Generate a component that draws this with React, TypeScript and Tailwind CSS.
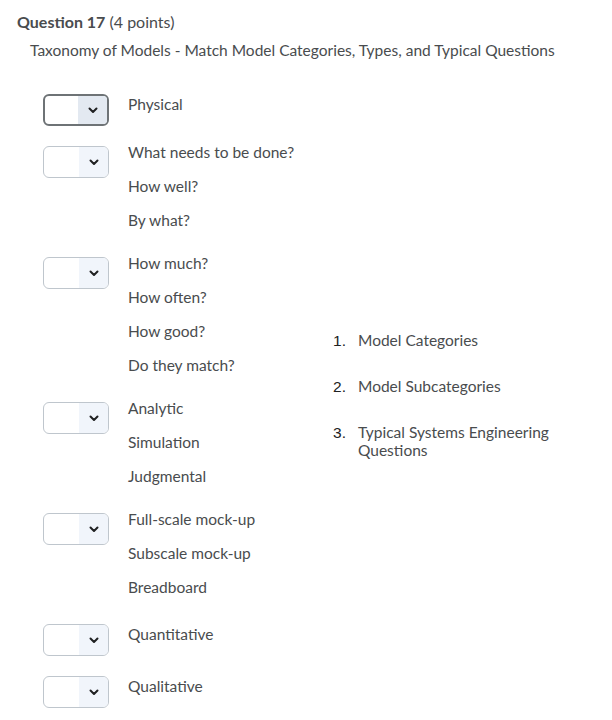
import React from "react"

const groups = [
  { items: ["Physical"], focused: true },
  { items: ["What needs to be done?", "How well?", "By what?"] },
  { items: ["How much?", "How often?", "How good?", "Do they match?"] },
  { items: ["Analytic", "Simulation", "Judgmental"] },
  { items: ["Full-scale mock-up", "Subscale mock-up", "Breadboard"] },
  { items: ["Quantitative"] },
  { items: ["Qualitative"] },
]

const answers = ["Model Categories", "Model Subcategories", "Typical Systems Engineering Questions"]

function Chevron() {
  return (
    <svg width="10" height="7" viewBox="0 0 10 7" fill="none">
      <path d="M1.5 1.5 L5 5 L8.5 1.5" stroke="#202122" strokeWidth="2" strokeLinecap="round" strokeLinejoin="round" />
    </svg>
  )
}

function Dropdown({ focused }: { focused?: boolean }) {
  return (
    <div
      className={`flex h-[32px] w-[66px] shrink-0 overflow-hidden rounded-[6px] bg-white ${
        focused ? "border-2 border-[#6e7376]" : "border border-[#bfc6cd]"
      }`}
    >
      <div className="flex-1" />
      <div className={`flex w-[29px] items-center justify-center ${focused ? "bg-[#e3e9f1]" : "bg-[#f1f5fb]"}`}>
        <Chevron />
      </div>
    </div>
  )
}

export default function App() {
  return (
    <div className="min-h-[720px] bg-white pl-[17px] pt-[13px] text-[15.5px] text-[#494c4e] [font-family:Lato,'Liberation_Sans',sans-serif]">
      {/* Header */}
      <div className="text-[16px] leading-[18px]">
        <span className="font-bold">Question 17</span> (4 points)
      </div>
      <div className="mt-[10px] ml-[13px] leading-[18px]">
        Taxonomy of Models - Match Model Categories, Types, and Typical Questions
      </div>

      {/* Matching area */}
      <div className="mt-[35px] ml-[26px] flex">
        <div className="flex w-[290px] shrink-0 flex-col gap-5">
          {groups.map((g, i) => (
            <div key={i} className="flex items-start gap-[19px]">
              <Dropdown focused={g.focused} />
              <div
                className={`flex flex-col gap-[14px] pb-[7px] leading-5 ${
                  g.items.length === 1 ? "mt-0" : "-mt-1"
                }`}
              >
                {g.items.map((t) => (
                  <div key={t}>{t}</div>
                ))}
              </div>
            </div>
          ))}
        </div>

        <ol className="mt-[237px] flex w-[232px] flex-col gap-[27px]">
          {answers.map((a, i) => (
            <li key={a} className="flex items-baseline leading-[18px]">
              <span className="w-[25px] shrink-0 text-[#202122] [font-family:'Liberation_Sans',sans-serif]">
                {i + 1}.
              </span>
              <span>{a}</span>
            </li>
          ))}
        </ol>
      </div>
    </div>
  )
}
